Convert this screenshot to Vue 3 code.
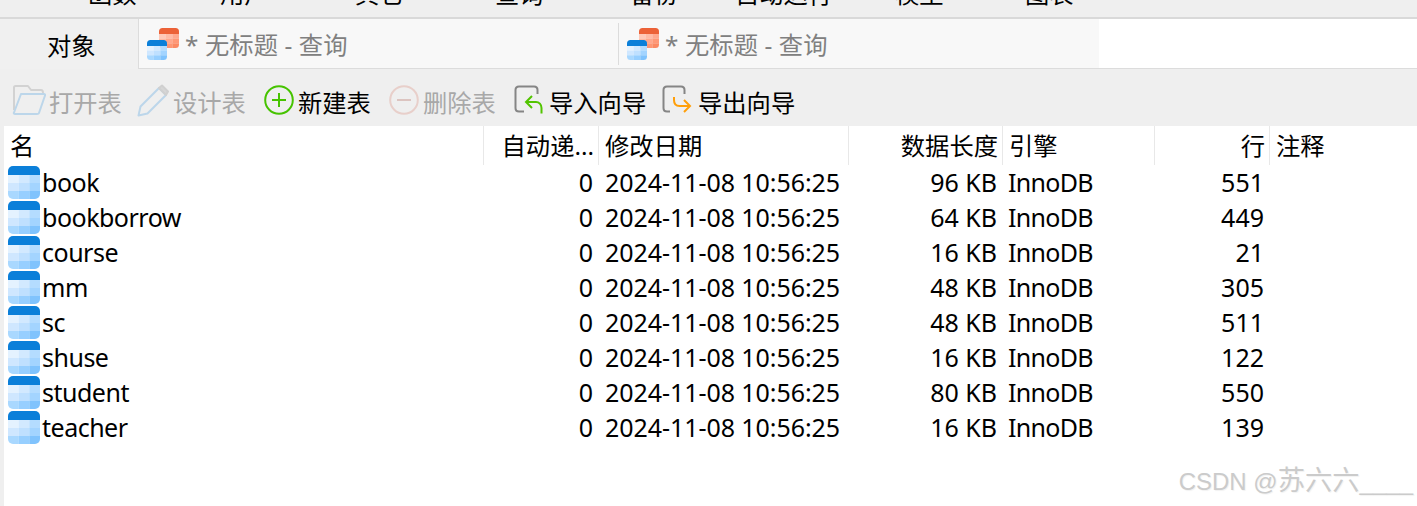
<script setup>
const menus = [
  { t: '函数', w: 132 }, { t: '用户', w: 135 }, { t: '其它', w: 140 }, { t: '查询', w: 135 },
  { t: '备份', w: 105 }, { t: '自动运行', w: 160 }, { t: '模型', w: 130 }, { t: '图表', w: 60 }
]
const rows = [
  ['book', '96 KB', 551], ['bookborrow', '64 KB', 449], ['course', '16 KB', 21], ['mm', '48 KB', 305],
  ['sc', '48 KB', 511], ['shuse', '16 KB', 122], ['student', '80 KB', 550], ['teacher', '16 KB', 139]
]
const blue = ['#e4f2ff', '#d2e9ff', '#b4dcff', '#cfe7ff', '#bfe0ff', '#a3d4ff', '#a9d8ff', '#97cfff', '#80c3fd']
const red = ['#ffc9b8', '#ffbba6', '#ffa98f', '#ffb8a2', '#ffa78d', '#ff9877', '#ffa181', '#ff9673', '#fb8a64']
const cells = (x, y, w, h, head, colors) => colors.map((fill, i) => ({
  x: x + (i % 3) * w / 3,
  y: y + head + Math.floor(i / 3) * (h - head) / 3,
  w: w / 3 + 0.1,
  h: (h - head) / 3 + 0.1,
  fill
}))
const bigCells = cells(0, 0, 32, 33, 9, blue)
const smallBlue = cells(0, 12, 20, 20, 6, blue)
const smallRed = cells(12, 0, 20, 20, 6, red)
</script>

<template>
  <div class="app">
    <div class="menu">
      <span v-for="m in menus" :key="m.t" class="menu-item" :style="{ width: m.w + 'px' }">{{ m.t }}</span>
    </div>

    <div class="tabs">
      <div class="tab tab-active">对象</div>
      <div v-for="n in 2" :key="n" class="tab tab-query">
        <svg class="tab-icon" width="32" height="32" viewBox="0 0 32 32">
          <defs>
            <clipPath :id="'r' + n"><rect x="12" y="0" width="20" height="20" rx="3.5" /></clipPath>
            <clipPath :id="'b' + n"><rect x="0" y="12" width="20" height="20" rx="3.5" /></clipPath>
          </defs>
          <g :clip-path="'url(#r' + n + ')'">
            <rect x="12" y="0" width="20" height="6" fill="#ec6238" />
            <rect v-for="(c, i) in smallRed" :key="i" :x="c.x" :y="c.y" :width="c.w" :height="c.h" :fill="c.fill" />
          </g>
          <g :clip-path="'url(#b' + n + ')'">
            <rect x="0" y="12" width="20" height="6" fill="#0b7fd9" />
            <rect v-for="(c, i) in smallBlue" :key="i" :x="c.x" :y="c.y" :width="c.w" :height="c.h" :fill="c.fill" />
          </g>
        </svg>
        <span class="tab-text">* 无标题 - 查询</span>
      </div>
    </div>

    <div class="toolbar">
      <div class="tool tool-open disabled">
        <svg width="34" height="32" viewBox="0 0 34 32" fill="none" stroke-width="2" stroke-linejoin="round">
          <path d="M2 26V3.500C2 2.500 2.500 2 3.500 2H16L19 6H29C30.500 6 31 7 31 9" stroke="#d2d2d2" />
          <path d="M9 10H32C33 10 33.300 10.700 33 11.500L27 29C26.700 30 26 30 25 30H3C2 30 1.500 29.300 2 28.500Z" stroke="#bcd6ea" />
        </svg>
        <span>打开表</span>
      </div>
      <div class="tool tool-design disabled">
        <svg width="32" height="33" viewBox="0 0 32 33" fill="none" stroke-width="2" stroke-linejoin="round">
          <path d="M1.500 31.500L3.500 22.500L22 4L29 11L10.500 29.500Z" stroke="#bcd6ea" />
          <path d="M22 4L25 1.500L31 7.500L29 11Z" fill="#d6d6d6" stroke="#d0d0d0" />
        </svg>
        <span>设计表</span>
      </div>
      <div class="tool tool-new">
        <svg width="30" height="30" viewBox="0 0 30 30" fill="none">
          <circle cx="15" cy="15" r="13.800" stroke="#46c300" stroke-width="2" />
          <path d="M15 8V22M8 15H22" stroke="#46c300" stroke-width="2" />
        </svg>
        <span>新建表</span>
      </div>
      <div class="tool tool-del disabled">
        <svg width="30" height="30" viewBox="0 0 30 30" fill="none">
          <circle cx="15" cy="15" r="13.800" stroke="#e8cfca" stroke-width="2" />
          <path d="M8 15H22" stroke="#dcc4c0" stroke-width="2" />
        </svg>
        <span>删除表</span>
      </div>
      <div class="tool tool-import">
        <svg width="30" height="30" viewBox="0 0 30 30" fill="none" stroke-width="2">
          <path d="M10 26.500H5C2.500 26.500 1.500 25.500 1.500 23V5C1.500 2.500 2.500 1.500 5 1.500H20C22.500 1.500 23.500 2.500 23.500 5V9" stroke="#858585" />
          <path d="M18 11L12 17L18 23M12 17H22C25 17 27.500 19.500 27.500 23V28.500" stroke="#52c400" />
        </svg>
        <span>导入向导</span>
      </div>
      <div class="tool tool-export">
        <svg width="30" height="30" viewBox="0 0 30 30" fill="none" stroke-width="2">
          <path d="M8 26.500H5C2.500 26.500 1.500 25.500 1.500 23V5C1.500 2.500 2.500 1.500 5 1.500H19C21.500 1.500 22.500 2.500 22.500 5V9" stroke="#858585" />
          <path d="M12 12V15C12 18.500 14 21 17.500 21H28M22 15L28 21L22 27" stroke="#ff9f0a" />
        </svg>
        <span>导出向导</span>
      </div>
    </div>

    <div class="table">
      <div class="row head">
        <div class="cell name-head">名</div>
        <div class="cell right">自动递...</div>
        <div class="cell">修改日期</div>
        <div class="cell right">数据长度</div>
        <div class="cell">引擎</div>
        <div class="cell right">行</div>
        <div class="cell last">注释</div>
      </div>
      <div v-for="r in rows" :key="r[0]" class="row body">
        <div class="cell name">
          <svg width="32" height="33" viewBox="0 0 32 33">
            <defs>
              <clipPath :id="'t' + r[0]"><rect width="32" height="33" rx="5" /></clipPath>
            </defs>
            <g :clip-path="'url(#t' + r[0] + ')'">
              <rect width="32" height="9" fill="#0b7fd9" />
              <rect v-for="(c, i) in bigCells" :key="i" :x="c.x" :y="c.y" :width="c.w" :height="c.h" :fill="c.fill" />
            </g>
          </svg>
          <span>{{ r[0] }}</span>
        </div>
        <div class="cell right">0</div>
        <div class="cell date">2024-11-08 10:56:25</div>
        <div class="cell right">{{ r[1] }}</div>
        <div class="cell engine">InnoDB</div>
        <div class="cell right">{{ r[2] }}</div>
        <div class="cell last"></div>
      </div>
    </div>

    <div class="watermark">CSDN @<span class="wm-cjk">苏六六</span>____</div>
  </div>
</template>

<style scoped>
.app {
  position: relative;
  width: 1417px;
  height: 506px;
  overflow: hidden;
  background: #efefef;
  color: #000;
  font-family: "Noto Sans", "Noto Sans CJK SC", sans-serif;
  font-size: 24.3px;
}
.menu {
  display: flex;
  height: 17px;
  padding-left: 88px;
  overflow: hidden;
  border-bottom: 2px solid #d9d9d9;
}
.menu-item {
  flex: none;
  height: 30px;
  margin-top: -21px;
  line-height: 30px;
  white-space: nowrap;
}
.tabs {
  display: flex;
  height: 49px;
  background: #fff;
  border-bottom: 1px solid #dcdcdc;
}
.tab {
  display: flex;
  align-items: center;
  flex: none;
}
.tab-active {
  width: 139px;
  height: 50px;
  margin-bottom: -1px;
  padding-left: 47px;
  box-sizing: border-box;
  background: #f0f0f0;
  border-right: 1px solid #dcdcdc;
}
.tab-query {
  width: 480px;
  padding-left: 8px;
  box-sizing: border-box;
  background: #f8f8f8;
  color: #808080;
  position: relative;
}
.tab-query + .tab-query::before {
  content: "";
  position: absolute;
  left: -1px;
  top: 4px;
  bottom: 3px;
  width: 1px;
  background: #dcdcdc;
}
.tab-icon {
  flex: none;
  margin-top: 1px;
}
.tab-text {
  margin-left: 6px;
  white-space: nowrap;
  letter-spacing: 0.1px;
}
.toolbar {
  display: flex;
  align-items: center;
  height: 57px;
  padding-top: 5px;
  box-sizing: border-box;
  background: #efefef;
}
.tool {
  display: flex;
  align-items: center;
  flex: none;
  white-space: nowrap;
}
.tool svg {
  flex: none;
}
.tool span {
  margin-top: 2px;
}
.disabled {
  color: #a8a8a8;
}
.tool-open { margin-left: 12px; width: 125px; }
.tool-open span { margin-left: 3px; }
.tool-design { width: 127px; }
.tool-design span { margin-left: 4px; }
.tool-new { width: 125px; }
.tool-new span { margin-left: 4px; }
.tool-del { width: 125px; }
.tool-del span { margin-left: 4px; }
.tool-import { width: 148px; }
.tool-import span { margin-left: 5px; }
.tool-export span { margin-left: 6px; }
.table {
  margin-left: 4px;
  height: 380px;
  background: #fff;
}
.row {
  display: grid;
  grid-template-columns: 480px 115px 250px 154px 152px 115px 1fr;
}
.head {
  height: 39px;
  margin-bottom: 1px;
}
.body {
  height: 35px;
}
.cell {
  display: flex;
  align-items: center;
  padding: 0 6px;
  white-space: nowrap;
  overflow: hidden;
}
.head .cell {
  border-right: 1px solid #e8e8e8;
  padding-bottom: 2px;
}
.head .right {
  padding-right: 4px;
}
.head .last {
  border-right: 0;
}
.body .cell {
  font-size: 25px;
  padding-bottom: 3px;
}
.right {
  justify-content: flex-end;
}
.body .right {
  padding-right: 6px;
}
.body .date {
  letter-spacing: -0.06px;
}
.body .engine {
  padding-left: 5px;
  letter-spacing: -0.7px;
}
.name-head {
  padding-left: 6px;
}
.body .name {
  padding: 0 0 0 4px;
  align-items: flex-start;
}
.name span {
  margin-left: 2px;
  margin-top: -1px;
  line-height: 35px;
  letter-spacing: -0.5px;
}
.watermark {
  position: absolute;
  right: 4px;
  top: 464px;
  font-family: "Liberation Sans", "Noto Sans CJK SC", sans-serif;
  font-size: 24px;
  line-height: 34px;
  color: #cbcbcb;
  text-shadow: 1px 1px 1px #f2f2f2;
  white-space: nowrap;
}
.wm-cjk {
  font-size: 27.3px;
}
</style>
